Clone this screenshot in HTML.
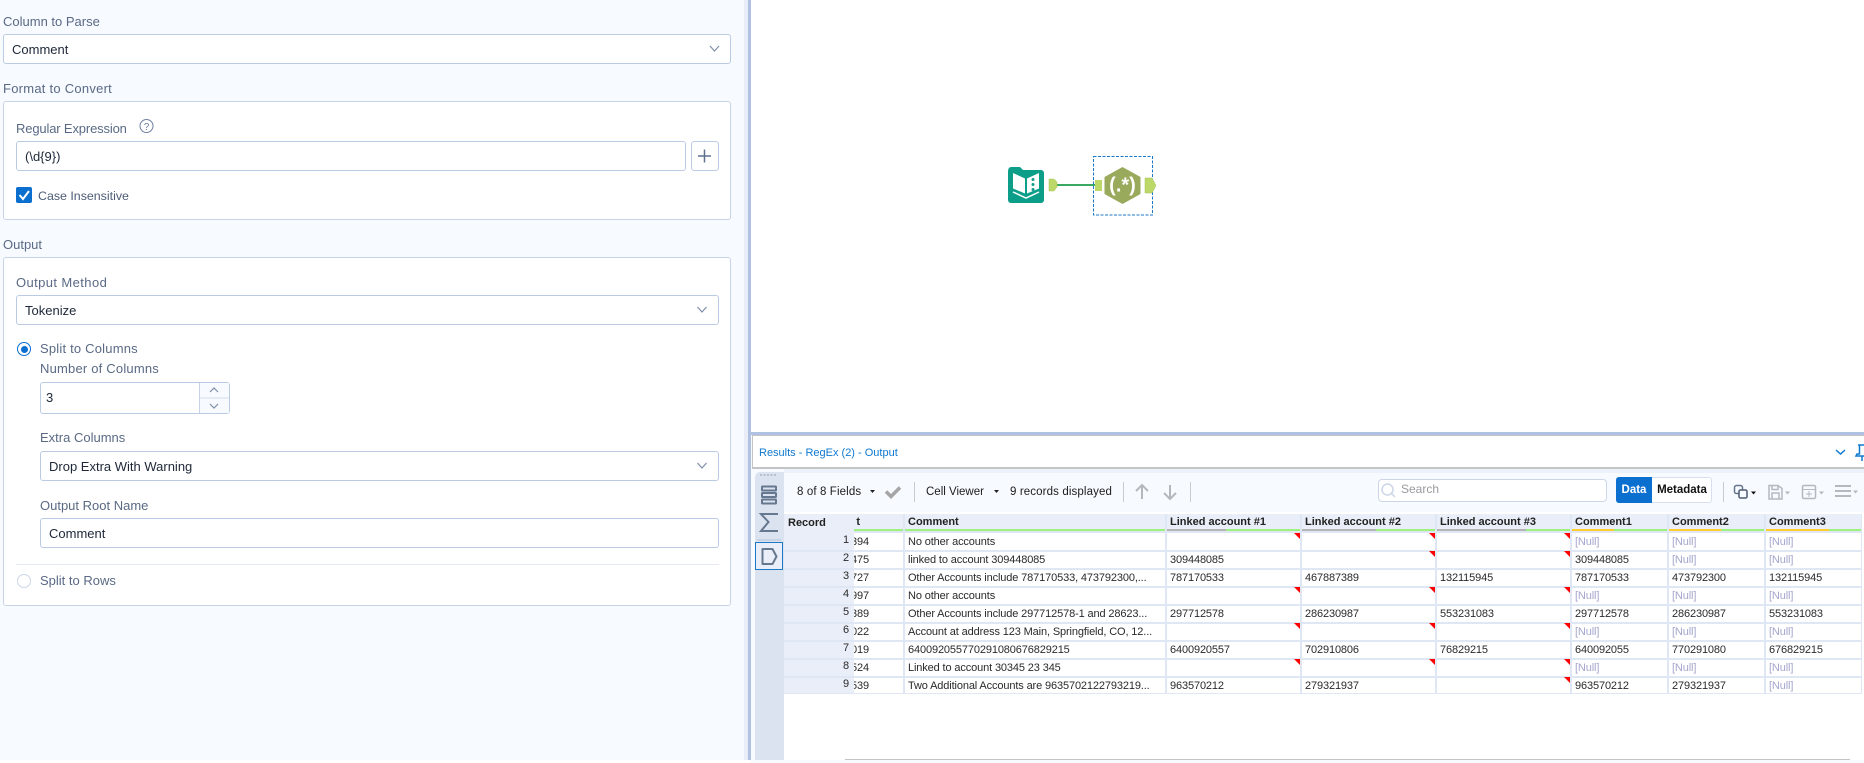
<!DOCTYPE html>
<html><head><meta charset="utf-8"><style>
html,body{margin:0;padding:0;width:1864px;height:760px;overflow:hidden;background:#fff;font-family:"Liberation Sans",sans-serif}
div{position:absolute;box-sizing:border-box}
.l{height:16px;line-height:16px;font-size:13px;color:#5a6a84;white-space:nowrap}
.v{height:16px;line-height:16px;font-size:13px;color:#1d2738;white-space:nowrap}
.f{background:#fff;border:1px solid #bccbe4;border-radius:3px}
.b{background:#fff;border:1px solid #c8d3e7;border-radius:3px}
.tb{height:16px;line-height:16px;font-size:11.5px;color:#1c1c1c;white-space:nowrap}
.h{top:514px;height:17px;background:#e9eef8;font-weight:bold;font-size:11px;line-height:17px;color:#222;padding-left:3px;white-space:nowrap;overflow:hidden}
.c{height:16px;line-height:16px;font-size:11px;letter-spacing:-.13px;color:#2a2a2a;white-space:nowrap}
.n{color:#a3a6cc}
</style></head><body>
<!-- left panel -->
<div style="left:0;top:0;width:744px;height:760px;background:#f7faff"></div>
<div style="left:744px;top:0;width:4px;height:760px;background:#e8edf7"></div>
<div style="left:748px;top:0;width:3px;height:760px;background:#b0c1e2"></div>

<div class="l" style="left:3px;top:14px">Column to Parse</div>
<div class="f" style="left:3px;top:34px;width:728px;height:30px"></div>
<div class="v" style="left:12px;top:42px">Comment</div>

<div class="l" style="left:3px;top:81px;letter-spacing:.25px">Format to Convert</div>
<div class="b" style="left:3px;top:101px;width:728px;height:119px"></div>
<div class="l" style="left:16px;top:121px;letter-spacing:-.15px">Regular Expression</div>
<div class="f" style="left:16px;top:141px;width:670px;height:30px"></div>
<div class="v" style="left:25px;top:149px">(\d{9})</div>
<div class="f" style="left:691px;top:141px;width:28px;height:30px"></div>
<div style="left:16px;top:187px;width:16px;height:16px;background:#0b6fd0;border-radius:2px"></div>
<div class="l" style="left:38px;top:188px;color:#4d5c76;font-size:12.4px">Case Insensitive</div>

<div class="l" style="left:3px;top:237px">Output</div>
<div class="b" style="left:3px;top:257px;width:728px;height:349px"></div>
<div class="l" style="left:16px;top:275px;letter-spacing:.4px">Output Method</div>
<div class="f" style="left:16px;top:295px;width:703px;height:30px"></div>
<div class="v" style="left:25px;top:303px">Tokenize</div>
<div style="left:17px;top:342px;width:14px;height:14px;border:1.5px solid #0b6fd0;border-radius:50%;background:#fff"></div>
<div style="left:20.5px;top:345.5px;width:7px;height:7px;border-radius:50%;background:#0b6fd0"></div>
<div class="l" style="left:40px;top:341px;letter-spacing:.2px">Split to Columns</div>
<div class="l" style="left:40px;top:361px;letter-spacing:.2px">Number of Columns</div>
<div class="f" style="left:40px;top:382px;width:190px;height:32px"></div>
<div style="left:199px;top:383px;width:30px;height:30px;background:#f7faff;border-left:1px solid #c8d3e7"></div>
<div style="left:200px;top:397px;width:29px;height:2px;background:#e6ecf7"></div>
<div class="v" style="left:46px;top:390px">3</div>
<div class="l" style="left:40px;top:430px">Extra Columns</div>
<div class="f" style="left:40px;top:451px;width:679px;height:30px"></div>
<div class="v" style="left:49px;top:459px">Drop Extra With Warning</div>
<div class="l" style="left:40px;top:498px">Output Root Name</div>
<div class="f" style="left:40px;top:518px;width:679px;height:30px"></div>
<div class="v" style="left:49px;top:526px">Comment</div>
<div style="left:16px;top:564px;width:703px;height:1px;background:#e4e9f3"></div>
<div style="left:17px;top:574px;width:14px;height:14px;border:1.5px solid #ccd6e8;border-radius:50%;background:#fff"></div>
<div class="l" style="left:40px;top:573px">Split to Rows</div>

<!-- canvas divider -->
<div style="left:751px;top:432px;width:1113px;height:3px;background:#b0c1e2"></div>
<div style="left:751px;top:435px;width:1113px;height:328px;background:#f7faff"></div>
<div style="left:752px;top:435px;width:1112px;height:34px;background:#fff;border:1px solid #c4c4c4;border-width:1px 0 2px 1px"></div>
<div style="left:759px;top:445px;height:16px;line-height:16px;font-size:11px;color:#0f79d0;white-space:nowrap">Results - RegEx (2) - Output</div>
<div style="left:755px;top:472px;width:29px;height:288px;background:#dbe3f1;border-radius:5px 0 0 0"></div>
<div style="left:784px;top:469px;width:1080px;height:4px;background:#edf1f9"></div>
<div style="left:784px;top:512px;width:1080px;height:248px;background:#fff"></div>
<div style="left:845px;top:759px;width:1005px;height:1px;background:#c4c4c4"></div>
<div style="left:755px;top:542px;width:28px;height:28px;background:#e9eef8;border:1px solid #1a78c8"></div>

<!-- toolbar -->
<div class="tb" style="left:797px;top:484px;letter-spacing:.12px">8 of 8 Fields</div>
<div class="tb" style="left:926px;top:484px">Cell Viewer</div>
<div class="tb" style="left:1010px;top:484px;letter-spacing:.12px">9 records displayed</div>
<div style="left:914px;top:482px;width:1px;height:20px;background:#c8ccd2"></div>
<div style="left:1123px;top:482px;width:1px;height:20px;background:#c8ccd2"></div>
<div style="left:1190px;top:482px;width:1px;height:20px;background:#c8ccd2"></div>
<div style="left:1723px;top:482px;width:1px;height:20px;background:#c8ccd2"></div>
<div style="left:1378px;top:479px;width:229px;height:23px;background:#fff;border:1px solid #cdd6e8;border-radius:4px"></div>
<div style="left:1401px;top:481px;height:16px;line-height:16px;font-size:12px;color:#9a9a9f;white-space:nowrap">Search</div>
<div style="left:1616px;top:477px;width:96px;height:26px;background:#fff;border:1px solid #d8e0ef;border-radius:3px"></div>
<div style="left:1616px;top:477px;width:36px;height:26px;background:#0b6fd0;border-radius:3px 0 0 3px;color:#fff;font-size:11.5px;line-height:26px;text-align:center;font-weight:bold">Data</div>
<div style="left:1652px;top:477px;width:60px;height:26px;color:#111;font-size:11.5px;line-height:26px;text-align:center;font-weight:bold">Metadata</div>

<!-- table header -->
<div style="left:784px;top:514px;width:1078px;height:19px;background:#e0e7f4"></div>
<div class="h" style="left:784px;width:70px;padding-left:4px;height:19px;line-height:18px">Record</div>
<div class="h" style="left:854px;width:49px"><span style="position:absolute;left:0;width:6px;overflow:hidden;direction:rtl">t</span></div>
<div class="h" style="left:905px;width:260px;padding-left:3px">Comment</div>
<div class="h" style="left:1167px;width:133px;padding-left:3px">Linked account #1</div>
<div class="h" style="left:1302px;width:133px;padding-left:3px">Linked account #2</div>
<div class="h" style="left:1437px;width:133px;padding-left:3px">Linked account #3</div>
<div class="h" style="left:1572px;width:95px">Comment1</div>
<div class="h" style="left:1669px;width:95px">Comment2</div>
<div class="h" style="left:1766px;width:95px">Comment3</div>
<div style="left:854px;top:529px;width:49px;height:2px;background:#9cf27c"></div>
<div style="left:905px;top:529px;width:260px;height:2px;background:#9cf27c"></div>
<div style="left:1167px;top:529px;width:133px;height:2px;background:linear-gradient(90deg,#b5b5b5 59px,#9cf27c 59px)"></div>
<div style="left:1302px;top:529px;width:133px;height:2px;background:linear-gradient(90deg,#b5b5b5 74px,#9cf27c 74px)"></div>
<div style="left:1437px;top:529px;width:133px;height:2px;background:linear-gradient(90deg,#b5b5b5 89px,#9cf27c 89px)"></div>
<div style="left:1572px;top:529px;width:95px;height:2px;background:linear-gradient(90deg,#ffce2e 42px,#9cf27c 42px)"></div>
<div style="left:1669px;top:529px;width:95px;height:2px;background:linear-gradient(90deg,#ffce2e 52px,#9cf27c 52px)"></div>
<div style="left:1766px;top:529px;width:95px;height:2px;background:linear-gradient(90deg,#ffce2e 63px,#9cf27c 63px)"></div>

<!-- grid -->
<div style="left:784px;top:533px;width:70px;height:161px;background:#e9eef8"></div>
<div style="left:903px;top:531px;width:2px;height:163px;background:#e0e7f4"></div>
<div style="left:1165px;top:531px;width:2px;height:163px;background:#e0e7f4"></div>
<div style="left:1300px;top:531px;width:2px;height:163px;background:#e0e7f4"></div>
<div style="left:1435px;top:531px;width:2px;height:163px;background:#e0e7f4"></div>
<div style="left:1570px;top:531px;width:2px;height:163px;background:#e0e7f4"></div>
<div style="left:1667px;top:531px;width:2px;height:163px;background:#e0e7f4"></div>
<div style="left:1764px;top:531px;width:2px;height:163px;background:#e0e7f4"></div>
<div style="left:1861px;top:514px;width:1px;height:180px;background:#e0e7f4"></div>
<div style="left:784px;top:550px;width:1078px;height:2px;background:#e0e7f4"></div>
<div style="left:784px;top:568px;width:1078px;height:2px;background:#e0e7f4"></div>
<div style="left:784px;top:586px;width:1078px;height:2px;background:#e0e7f4"></div>
<div style="left:784px;top:604px;width:1078px;height:2px;background:#e0e7f4"></div>
<div style="left:784px;top:622px;width:1078px;height:2px;background:#e0e7f4"></div>
<div style="left:784px;top:640px;width:1078px;height:2px;background:#e0e7f4"></div>
<div style="left:784px;top:658px;width:1078px;height:2px;background:#e0e7f4"></div>
<div style="left:784px;top:676px;width:1078px;height:2px;background:#e0e7f4"></div>
<div style="left:784px;top:693px;width:1078px;height:1px;background:#e0e7f4"></div>

<!-- record numbers -->
<div class="c" style="left:830px;width:19px;text-align:right;top:532px">1</div>
<div class="c" style="left:830px;width:19px;text-align:right;top:550px">2</div>
<div class="c" style="left:830px;width:19px;text-align:right;top:568px">3</div>
<div class="c" style="left:830px;width:19px;text-align:right;top:586px">4</div>
<div class="c" style="left:830px;width:19px;text-align:right;top:604px">5</div>
<div class="c" style="left:830px;width:19px;text-align:right;top:622px">6</div>
<div class="c" style="left:830px;width:19px;text-align:right;top:640px">7</div>
<div class="c" style="left:830px;width:19px;text-align:right;top:658px">8</div>
<div class="c" style="left:830px;width:19px;text-align:right;top:676px">9</div>
<!-- clipped col -->
<div style="left:854px;top:530px;width:49px;height:164px;overflow:hidden">
<div class="c" style="right:34px;top:4px">394</div>
<div class="c" style="right:34px;top:22px">475</div>
<div class="c" style="right:34px;top:40px">727</div>
<div class="c" style="right:34px;top:58px">997</div>
<div class="c" style="right:34px;top:76px">389</div>
<div class="c" style="right:34px;top:94px">022</div>
<div class="c" style="right:34px;top:112px">019</div>
<div class="c" style="right:34px;top:130px">524</div>
<div class="c" style="right:34px;top:148px">539</div>
</div>
<!-- comments -->
<div class="c" style="left:908px;top:534px">No other accounts</div>
<div class="c" style="left:908px;top:552px">linked to account 309448085</div>
<div class="c" style="left:908px;top:570px">Other Accounts include 787170533, 473792300,...</div>
<div class="c" style="left:908px;top:588px">No other accounts</div>
<div class="c" style="left:908px;top:606px">Other Accounts include 297712578-1 and 28623...</div>
<div class="c" style="left:908px;top:624px">Account at address 123 Main, Springfield, CO, 12...</div>
<div class="c" style="left:908px;top:642px">640092055770291080676829215</div>
<div class="c" style="left:908px;top:660px">Linked to account 30345 23 345</div>
<div class="c" style="left:908px;top:678px">Two Additional Accounts are 9635702122793219...</div>
<!-- linked -->
<div class="c" style="left:1170px;top:552px">309448085</div>
<div class="c" style="left:1170px;top:570px">787170533</div>
<div class="c" style="left:1305px;top:570px">467887389</div>
<div class="c" style="left:1440px;top:570px">132115945</div>
<div class="c" style="left:1170px;top:606px">297712578</div>
<div class="c" style="left:1305px;top:606px">286230987</div>
<div class="c" style="left:1440px;top:606px">553231083</div>
<div class="c" style="left:1170px;top:642px">6400920557</div>
<div class="c" style="left:1305px;top:642px">702910806</div>
<div class="c" style="left:1440px;top:642px">76829215</div>
<div class="c" style="left:1170px;top:678px">963570212</div>
<div class="c" style="left:1305px;top:678px">279321937</div>
<!-- comment1-3 -->
<div class="c n" style="left:1575px;top:534px">[Null]</div><div class="c n" style="left:1672px;top:534px">[Null]</div><div class="c n" style="left:1769px;top:534px">[Null]</div>
<div class="c" style="left:1575px;top:552px">309448085</div><div class="c n" style="left:1672px;top:552px">[Null]</div><div class="c n" style="left:1769px;top:552px">[Null]</div>
<div class="c" style="left:1575px;top:570px">787170533</div><div class="c" style="left:1672px;top:570px">473792300</div><div class="c" style="left:1769px;top:570px">132115945</div>
<div class="c n" style="left:1575px;top:588px">[Null]</div><div class="c n" style="left:1672px;top:588px">[Null]</div><div class="c n" style="left:1769px;top:588px">[Null]</div>
<div class="c" style="left:1575px;top:606px">297712578</div><div class="c" style="left:1672px;top:606px">286230987</div><div class="c" style="left:1769px;top:606px">553231083</div>
<div class="c n" style="left:1575px;top:624px">[Null]</div><div class="c n" style="left:1672px;top:624px">[Null]</div><div class="c n" style="left:1769px;top:624px">[Null]</div>
<div class="c" style="left:1575px;top:642px">640092055</div><div class="c" style="left:1672px;top:642px">770291080</div><div class="c" style="left:1769px;top:642px">676829215</div>
<div class="c n" style="left:1575px;top:660px">[Null]</div><div class="c n" style="left:1672px;top:660px">[Null]</div><div class="c n" style="left:1769px;top:660px">[Null]</div>
<div class="c" style="left:1575px;top:678px">963570212</div><div class="c" style="left:1672px;top:678px">279321937</div><div class="c n" style="left:1769px;top:678px">[Null]</div>

<!-- icons overlay -->
<svg width="1864" height="760" style="position:absolute;left:0;top:0" fill="none">
<!-- chevrons left -->
<path d="M710 46l4.500 5 4.500-5M697.500 307l4.500 5 4.500-5M697.500 463l4.500 5 4.500-5" stroke="#7e8ea8" stroke-width="1.200"/>
<path d="M210 392l4-4 4 4M210 404l4 4 4-4" stroke="#7e8ea8" stroke-width="1.200"/>
<circle cx="146.500" cy="126" r="6.500" stroke="#6f80a0"/>
<text x="146.500" y="130" font-family="Liberation Sans" font-size="10" fill="#6f80a0" text-anchor="middle">?</text>
<path d="M698 156h13M704.500 149.500v13" stroke="#5f7090" stroke-width="1.500"/>
<path d="M19.500 195l3.500 4 6-8" stroke="#fff" stroke-width="2"/>
<!-- workflow -->
<rect x="1008" y="170" width="36" height="33" rx="3" fill="#0d9e8a"/>
<path d="M1008 172q0-5 3-5h9l3 3v3h-15z" fill="#0d9e8a"/>
<path d="M1013 173l12 5.500v15l-12-5zM1039 173l-12 5.500v15l12-5z" fill="#fff"/>
<circle cx="1033" cy="179.500" r="1.500" fill="#0d9e8a"/><circle cx="1033" cy="184.500" r="1.500" fill="#0d9e8a"/><circle cx="1033" cy="189.500" r="1.500" fill="#0d9e8a"/>
<path d="M1013 192l13 6 13-6" stroke="#fff" stroke-width="1.500"/>
<path d="M1056 185H1097" stroke="#3aa860" stroke-width="2"/>
<path d="M1049 179h5l3 3v5l-3 4h-5z" fill="#bcd868" stroke="#a4c455" stroke-width=".5"/>
<rect x="1093.500" y="156.500" width="59" height="58.500" stroke="#1a78c8" stroke-dasharray="3 1.500"/>
<path d="M1095 180h7v11h-7z" fill="#bcd868"/>
<path d="M1122.500 167l18 10v17l-18 10-18-10v-17z" fill="#99aa5c"/>
<text x="1122.500" y="191.500" font-family="Liberation Sans" font-size="20" font-weight="bold" fill="#fff" text-anchor="middle">(.*)</text>
<path d="M1145 178h7l4 7.500-4 7.500h-7z" fill="#bcd868" stroke="#a4c455" stroke-width=".5"/>
<!-- sidebar icons -->
<path d="M760 475h17" stroke="#a9b3c6" stroke-width="1.500" stroke-dasharray="2 1.500"/>
<path d="M757 540h24" stroke="#b6c0d2"/>
<g stroke="#66788f" stroke-width="2">
<rect x="762" y="486.500" width="14" height="4" rx=".5"/><rect x="762" y="493" width="14" height="4" rx=".5"/><rect x="762" y="499.500" width="14" height="4" rx=".5"/>
<path d="M778 514h-17l7.500 8-7.500 9h17"/>
<path d="M762.500 549h10l4 7.500-4 7.500h-10z" stroke-linejoin="round"/>
</g>
<!-- toolbar icons -->
<path d="M870 490h5l-2.500 3zM994 490h5l-2.500 3z" fill="#222"/>
<path d="M886 491.500l5 5 9-9" stroke="#a5a5a5" stroke-width="3.500"/>
<path d="M1142 499v-14M1136 491l6-6 6 6M1170 485v14M1164 493l6 6 6-6" stroke="#b4b7bc" stroke-width="2"/>
<circle cx="1387.500" cy="489.500" r="5.500" stroke="#ccd6e8" stroke-width="1.500"/><path d="M1391.500 493.500l3.500 3.500" stroke="#ccd6e8" stroke-width="1.500"/>
<rect x="1734.500" y="485.500" width="8" height="8" rx="2" stroke="#68768c" stroke-width="1.500"/>
<rect x="1739" y="490" width="8" height="8" rx="1.500" fill="#f7faff" stroke="#4d5b73" stroke-width="1.500"/>
<path d="M1751 491.500h5l-2.500 3z" fill="#111"/>
<path d="M1769 485.500h9l4 3v10.500h-13zM1772 485.500v4h6v-4M1772 499v-6h7v6" stroke="#b4b8bf" stroke-width="1.500"/>
<path d="M1785 491.500h5l-2.500 3z" fill="#b4b8bf"/>
<rect x="1802.500" y="485.500" width="13" height="13" rx="1.500" stroke="#b4b8bf" stroke-width="1.500"/>
<path d="M1803 489.500h12M1806 494h6M1809 491v6" stroke="#b4b8bf"/>
<path d="M1819 491.500h5l-2.500 3z" fill="#b4b8bf"/>
<path d="M1835 486h16M1835 491h16M1835 496h16" stroke="#b4b8bf" stroke-width="2"/>
<path d="M1853 490.500h5l-2.500 3z" fill="#b4b8bf"/>
<path d="M1836 450l4.500 4 4.500-4" stroke="#0f79d0" stroke-width="1.500"/>
<path d="M1858 445h6M1859.500 445v9h-2.500l-1 2h8M1862 456v5" stroke="#0f79d0" stroke-width="1.500"/>
<!-- red corners -->
<g fill="#f00">
<path d="M1294 533h6v6zM1429 533h6v6zM1564 533h6v6z"/>
<path d="M1429 551h6v6zM1564 551h6v6z"/>
<path d="M1294 587h6v6zM1429 587h6v6zM1564 587h6v6z"/>
<path d="M1294 623h6v6zM1429 623h6v6zM1564 623h6v6z"/>
<path d="M1294 659h6v6zM1429 659h6v6zM1564 659h6v6z"/>
<path d="M1564 677h6v6z"/>
</g>
</svg>
</body></html>
